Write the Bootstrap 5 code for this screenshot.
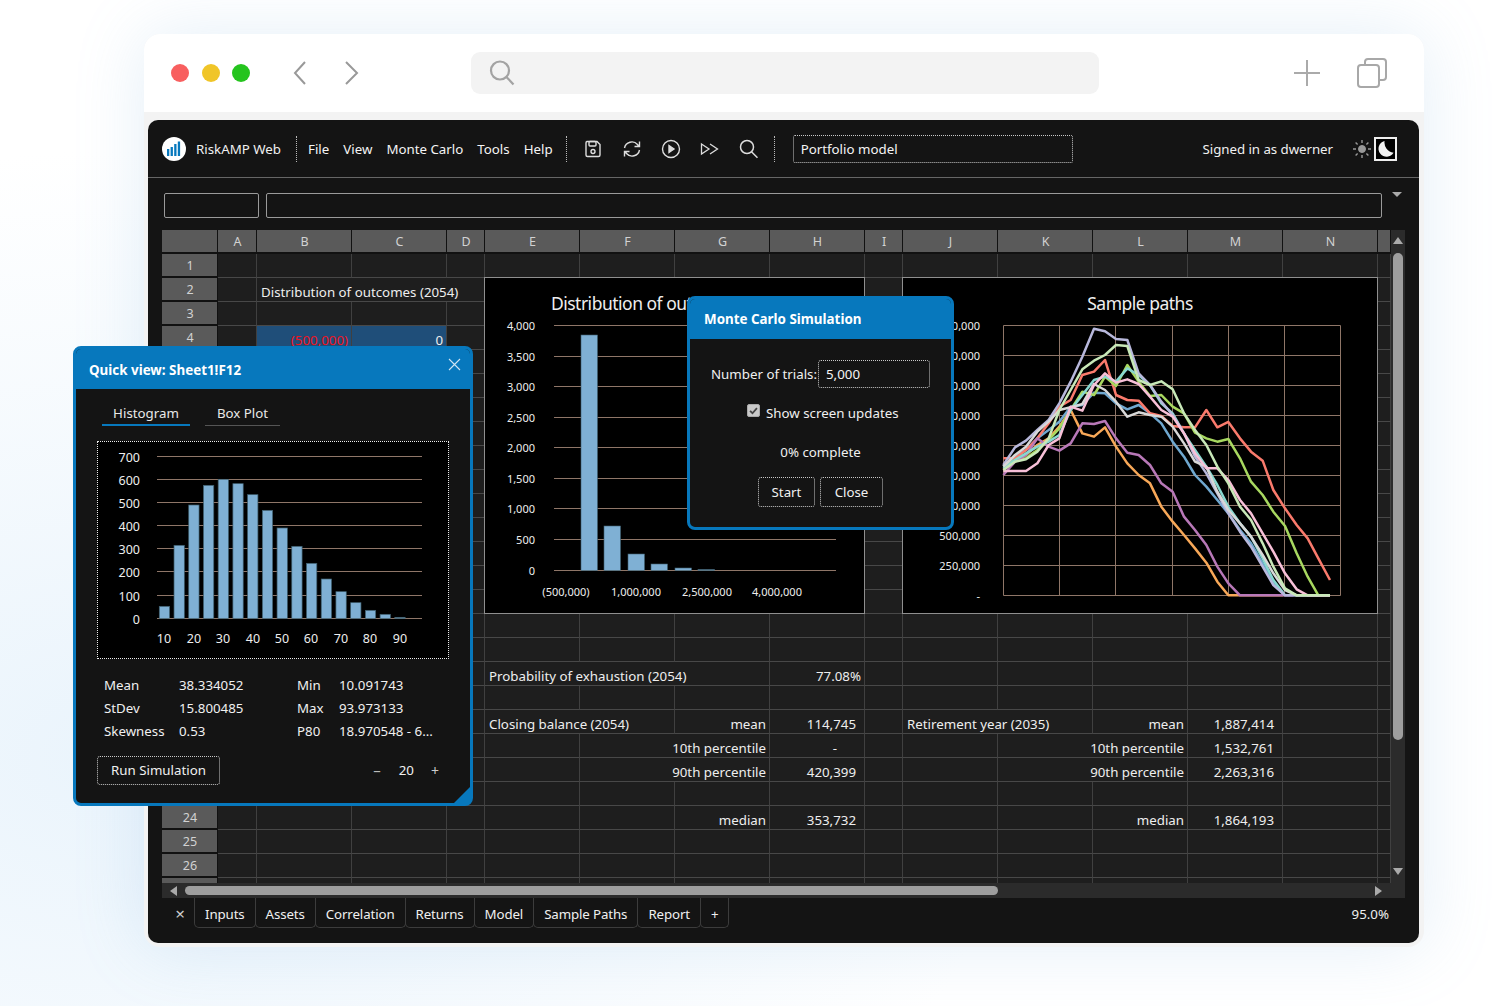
<!DOCTYPE html>
<html lang="en">
<head>
<meta charset="utf-8">
<title>RiskAMP Web</title>
<link href="https://cdn.jsdelivr.net/npm/bootstrap@5.3.0/dist/css/bootstrap.min.css" rel="stylesheet">
<style>
html,body{margin:0;background:#fff;overflow:hidden}
body{font-family:"Noto Sans","Liberation Sans",sans-serif;font-size:13.3px;color:#f0f0f0}
.stage{position:relative;width:1497px;height:1006px;padding:34px 73px 0 144px;overflow:hidden;
 background:radial-gradient(ellipse 60% 60% at 8% 75%,#eaf4fc 0,#fff 100%)}
.shell{width:1280px;height:913px;background:#f3f3f3;border-radius:16px;box-shadow:0 0 70px rgba(120,175,220,.2);overflow:hidden}
.topbar{height:78px;background:#fff;padding:0 37px 0 27px}
.dot{width:18px;height:18px;border-radius:50%;margin-right:12.5px}
.d-r{background:#f85f5f}.d-y{background:#f0c528}.d-g{background:#25c41e}
.navarrows{margin-left:29px}
.addr{width:628px;height:42px;background:#f3f3f3;border-radius:9px;margin:0 auto 0 103px;padding-left:17px}
.copyic{margin-left:36px}
.app{width:1271px;height:823px;margin:8px 0 0 4px;background:#141414;border-radius:10px;overflow:hidden}
.tbar{height:58px;padding:0 22px 0 14px;border-bottom:1px solid #666;flex-wrap:nowrap}
.logo{width:24px;height:24px;border-radius:50%;background:#fff;margin-right:10px}
.vsep{width:0;height:26px;border-left:1px dotted #bbb}
.lbl{position:relative;top:1px}
.brand{margin-right:15px}
.sep1{margin-right:11px}.sep2{margin-right:16px}
.mi{margin-right:14px;color:#f4f4f4}
.mi-last{margin-right:13px}
.tool{margin-right:19px;width:20px;height:20px;display:block}
.tool-last{margin-right:15px}
.dot-input{border:1px dotted #c8c8c8;border-radius:2px;background:transparent;color:#f4f4f4;font-size:13.3px}
.dot-input:focus{background:transparent;color:#f4f4f4}
.doc{width:280px;height:28px;padding:0 7px;margin-left:18px}
.signed{margin-right:20px;letter-spacing:-.05px}
.moon{width:23px;height:24px;border:2px solid #eee;background:#000;margin-left:3px}
.fbar{height:52px;padding:15px 0 0 16px}
.fbox{height:25px;border:1px solid #9a9a9a;border-radius:2px}
.fname{width:95px;margin-right:7px}.fmain{width:1116px}
.caret-d{width:0;height:0;border:5px solid transparent;border-top:5px solid #aaa;border-bottom:0;margin:-1px 0 0 10px}
.gridwrap{height:668px;margin-left:14px;width:1243px}
.sheet{display:grid;grid-template-columns:56px 39px 95px 95px 38px 95px 95px 95px 95px 38px 95px 95px 95px 95px 95px 13px;grid-auto-rows:24px;width:1229px;height:653px;overflow:hidden;background:#1e1e1e;align-content:start}
.hd{background:#5a5a5a;color:#d2d2d2;text-align:center;line-height:23px;border-right:1px solid #111;border-bottom:2px solid #111;font-size:12.5px;padding-left:1px}
.cl{border-right:1px solid #404040;border-bottom:1px solid #484848;padding:3px 4px 0;line-height:23px;white-space:nowrap;overflow:hidden;color:#eee}
.cl.rt{text-align:right;padding-right:3px}
.cl.ac{padding-right:8px}.cl.ac2{padding-right:27px}
.blu{background:#1f4e79}.red{color:#f01322}
.chartbox{margin:-1px 0 0 -1px;border:1px solid #8f8f8f;background:#000;z-index:1}
.chartbox svg{display:block}
.cx{font-family:"Noto Sans","Liberation Sans",sans-serif}
.ttl{letter-spacing:-.5px}
.vs{width:14px;height:653px;background:#2b2b2b}
.vthumb{width:10px;height:487px;margin:9px auto 0;border-radius:5px;background:#9e9e9e}
.arr-u{width:0;height:0;border:5px solid transparent;border-bottom:7px solid #aaa;border-top:0;margin:7px auto 0}
.arr-d{width:0;height:0;border:5px solid transparent;border-top:7px solid #aaa;border-bottom:0;margin:0 auto 8px}
.hs{height:15px;background:#2b2b2b;width:1243px;padding:0 23px 0 8px}
.arr-l{width:0;height:0;border:5px solid transparent;border-right:7px solid #aaa;border-left:0}
.arr-r{width:0;height:0;border:5px solid transparent;border-left:7px solid #aaa;border-right:0;margin-left:auto}
.hthumb{width:813px;height:9px;border-radius:5px;background:#9e9e9e;margin-left:8px}
.sheetbar{height:30px;margin-left:14px;width:1227px}
.sx{width:33px;padding-left:3px;text-align:center;color:#ccc;font-size:17px;line-height:31px}
.stab{border:1px solid #3c3c3c;border-top:0;border-radius:0 0 5px 5px;height:30px;line-height:33px;padding:0 10px;color:#f0f0f0;margin-left:-1px;letter-spacing:-.12px}
.zoomv{margin-left:auto;color:#eee;line-height:33px}
.win{position:absolute;z-index:5;border:3px solid #0778bd;border-radius:8px;background:#141414;--bs-card-bg:#141414;color:#f0f0f0}
.win .card-header{background:#0778bd;border:0;border-radius:5px 5px 0 0;color:#fff;font-weight:700;font-size:13.4px;padding:0 13px;height:40px;line-height:42px;position:relative}
.qv{left:73px;top:346px;width:400px;height:460px}
.qv .card-body{padding:0 21px}
.mc{left:687px;top:296px;width:267px;height:234px}
.win.mc .card-header{height:40px;padding-left:14px;line-height:40px}
.xbtn{position:absolute;right:9px;top:9px;width:13px;height:13px}
.qtabs{padding:13px 0 0 5px;height:52px;gap:15px}
.qt{height:24px;line-height:23px;text-align:center;border-bottom:1px solid #555;color:#e8e8e8}
.qt.on{border-bottom:2px solid #0778bd}
.qt-a{width:88px}.qt-b{width:75px}
.hbox{width:352px;height:218px;border:1px dotted #eee;background:#000}
.stat{display:grid;grid-template-columns:75px 118px 42px auto;grid-auto-rows:23px;line-height:23px;padding:15px 0 0 7px;height:97px}
.dbtn{border:1px dotted #c8c8c8;border-radius:3px;color:#f0f0f0;font-size:13.3px;padding:0;height:29px;line-height:27px;background:transparent;--bs-btn-hover-color:#fff}
.run{width:123px}
.stepper{margin-left:auto;gap:19px;padding-right:10px;align-items:center}
.minus{color:#bbb;font-size:15px;padding-right:1px;margin-right:-2px}.plus{color:#ccc;font-size:14px;margin-left:-2px}
.grip{position:absolute;right:0;bottom:0;width:16px;height:16px;background:#0778bd;clip-path:polygon(100% 0,100% 100%,0 100%)}
.mc .card-body{padding:21px 0 0}
.mrow{padding-left:21px;height:28px;gap:1px}
.tr{width:112px;height:28px;padding:0 7px;border-radius:3px}
.chk{margin-top:16px;height:20px;padding-left:57px;gap:6px}
.chk .form-check-input{width:13px;height:13px;margin:-7px 0 0;background-color:#c9c9c9;border:1px solid #aaa;border-radius:2px;
 background-image:url("data:image/svg+xml,%3csvg xmlns='http://www.w3.org/2000/svg' viewBox='0 0 16 16'%3e%3cpath fill='none' stroke='%23444' stroke-width='2.6' d='M3 8.5l3.5 3.5L13 4.5'/%3e%3c/svg%3e")}
.pct{margin-top:18px;text-align:center;line-height:20px}
.mbtns{margin-top:15px;gap:5px}
.b-start{width:57px;height:30px}.b-close{width:63px;height:30px}
</style>
</head>
<body>
<div class="stage">
 <div class="shell">
  <div class="topbar d-flex align-items-center">
   <span class="dot d-r"></span><span class="dot d-y"></span><span class="dot d-g"></span>
   <svg class="navarrows" width="76" height="26" viewBox="0 0 76 26" fill="none" stroke="#999" stroke-width="2"><path d="M13 2 3 13l10 11"/><path d="M54 2l11 11-11 11"/></svg>
   <div class="addr d-flex align-items-center">
    <svg width="28" height="28" viewBox="0 0 28 28" fill="none" stroke="#a3a3a3" stroke-width="2.2"><circle cx="12" cy="11.5" r="9"/><path d="M18.5 18l7 7.5"/></svg>
   </div>
   <svg width="28" height="28" viewBox="0 0 28 28" fill="none" stroke="#aaa" stroke-width="2"><path d="M14 1v26M1 14h26"/></svg>
   <svg class="copyic" width="30" height="30" viewBox="0 0 30 30" fill="none" stroke="#a8a8a8" stroke-width="2"><rect x="1" y="7" width="21" height="22" rx="3"/><path d="M8 7V4a3 3 0 0 1 3-3h15a3 3 0 0 1 3 3v15a3 3 0 0 1-3 3h-4"/></svg>
  </div>
  <div class="app">
   <nav class="navbar tbar d-flex align-items-center justify-content-start">
    <svg class="logo" viewBox="0 0 24 24"><g fill="#0778bd"><rect x="5" y="12" width="2.3" height="7"/><rect x="8.6" y="10" width="2.3" height="9"/><rect x="12.2" y="7" width="2.3" height="12"/><rect x="15.8" y="4.5" width="2.3" height="14.5"/></g></svg>
    <span class="brand lbl text-nowrap">RiskAMP Web</span>
    <span class="vsep sep1"></span>
    <span class="mi lbl">File</span><span class="mi lbl">View</span><span class="mi lbl text-nowrap">Monte Carlo</span><span class="mi lbl">Tools</span><span class="mi mi-last lbl">Help</span>
    <span class="vsep sep2"></span>
    <svg class="tool" viewBox="0 0 20 20" fill="none" stroke="#ddd" stroke-width="1.4"><path d="M4 2.5h10l3 3V16a1.500 1.500 0 0 1-1.500 1.500H4.500A1.500 1.500 0 0 1 3 16V4a1.500 1.500 0 0 1 1-1.500z"/><rect x="6" y="2.500" width="7" height="4.500" rx="1"/><circle cx="10" cy="12.500" r="2"/></svg>
    <svg class="tool" viewBox="0 0 20 20" fill="none" stroke="#ddd" stroke-width="1.4"><path d="M2.500 9a7.500 7.500 0 0 1 13-3.500L17 7.500M17.500 2.500v5h-5"/><path d="M17.500 11a7.500 7.500 0 0 1-13 3.500L3 12.500M2.500 17.500v-5h5"/></svg>
    <svg class="tool" viewBox="0 0 20 20" fill="none" stroke="#ddd" stroke-width="1.4"><circle cx="10" cy="10" r="8.500"/><path d="M8 6.500l5 3.500-5 3.500z" fill="#ddd"/></svg>
    <svg class="tool" viewBox="0 0 20 20" fill="none" stroke="#ddd" stroke-width="1.3"><path d="M1.500 5l7.500 5-7.500 5zM10 5l7.500 5-7.500 5"/></svg>
    <svg class="tool tool-last" viewBox="0 0 20 20" fill="none" stroke="#ddd" stroke-width="1.500"><circle cx="8" cy="8" r="6.500"/><path d="M12.500 12.800l6 6"/></svg>
    <span class="vsep"></span>
    <input class="form-control dot-input doc" value="Portfolio model" aria-label="Model name">
    <span class="signed lbl ms-auto text-nowrap">Signed in as dwerner</span>
    <svg width="18" height="18" viewBox="0 0 18 18" fill="#999" stroke="#999"><circle cx="9" cy="9" r="3.500"/><path d="M9 0v3M9 15v3M0 9h3M15 9h3M2.600 2.600l2 2M13.400 13.400l2 2M2.600 15.400l2-2M13.400 4.600l2-2" stroke-width="1.400"/></svg>
    <svg class="moon" viewBox="0 0 20 20"><path d="M9 1.500A8.500 8.500 0 1 0 18.500 14 A11 11 0 0 1 9 1.500z" fill="#f2f2f2"/></svg>
   </nav>
   <div class="fbar d-flex">
    <div class="fbox fname"></div>
    <div class="fbox fmain"></div>
    <span class="caret-d"></span>
   </div>
   <div class="gridwrap">
    <div class="d-flex">
     <div class="sheet" id="sheet"></div>
     <div class="vs d-flex flex-column"><span class="arr-u"></span><span class="vthumb"></span><span class="arr-d mt-auto"></span></div>
    </div>
    <div class="hs d-flex align-items-center"><span class="arr-l"></span><span class="hthumb"></span><span class="arr-r"></span></div>
   </div>
   <div class="sheetbar d-flex">
    <span class="sx">×</span>
    <span class="stab">Inputs</span><span class="stab">Assets</span><span class="stab">Correlation</span><span class="stab">Returns</span><span class="stab">Model</span><span class="stab">Sample Paths</span><span class="stab">Report</span><span class="stab">+</span>
    <span class="zoomv">95.0%</span>
   </div>
  </div>
 </div>

 <div class="card win qv">
  <div class="card-header">Quick view: Sheet1!F12
   <svg class="xbtn" viewBox="0 0 13 13" stroke="#cfe4f2" stroke-width="1.100"><path d="M1 1l11 11M12 1 1 12"/></svg>
  </div>
  <div class="card-body">
   <div class="d-flex qtabs">
    <div class="qt qt-a on">Histogram</div>
    <div class="qt qt-b">Box Plot</div>
   </div>
   <div class="hbox"><svg id="hist" width="350" height="216" viewBox="98 442 350 216"></svg></div>
   <div class="stat">
    <span>Mean</span><span>38.334052</span><span>Min</span><span>10.091743</span>
    <span>StDev</span><span>15.800485</span><span>Max</span><span>93.973133</span>
    <span>Skewness</span><span>0.53</span><span>P80</span><span>18.970548 - 6...</span>
   </div>
   <div class="d-flex align-items-center">
    <button class="btn dbtn run" type="button">Run Simulation</button>
    <div class="d-flex stepper"><span class="minus">–</span><span>20</span><span class="plus">+</span></div>
   </div>
  </div>
  <span class="grip"></span>
 </div>

 <div class="card win mc">
  <div class="card-header">Monte Carlo Simulation</div>
  <div class="card-body">
   <div class="d-flex align-items-center mrow"><span class="lbl text-nowrap">Number of trials:</span><input class="form-control dot-input tr" value="5,000" aria-label="Number of trials"></div>
   <div class="d-flex align-items-center chk"><input class="form-check-input" type="checkbox" checked aria-label="Show screen updates"><span>Show screen updates</span></div>
   <div class="pct">0% complete</div>
   <div class="d-flex justify-content-center mbtns">
    <button class="btn dbtn b-start" type="button">Start</button>
    <button class="btn dbtn b-close" type="button">Close</button>
   </div>
  </div>
 </div>
</div>
<script src="https://cdn.jsdelivr.net/npm/bootstrap@5.3.0/dist/js/bootstrap.bundle.min.js"></script>
<script>
const NS='http://www.w3.org/2000/svg';
const sheet=document.getElementById('sheet');
function div(cls,txt,col,span,row,rspan){const d=document.createElement('div');d.className=cls;if(txt)d.textContent=txt;
 if(col){d.style.gridColumn=col+' / span '+(span||1);d.style.gridRow=row+' / span '+(rspan||1);}sheet.appendChild(d);return d;}
const heads=['','A','B','C','D','E','F','G','H','I','J','K','L','M','N',''];
heads.forEach((h,i)=>div('hd',h,i+1,1,1));
const special={
 '2,3':[3,'Distribution of outcomes (2054)',''],
 '4,3':[1,'(500,000)','rt blu red'],'4,4':[1,'0','rt blu'],
 '18,6':[3,'Probability of exhaustion (2054)',''],'18,9':[1,'77.08%','rt'],
 '20,6':[2,'Closing balance (2054)',''],'20,8':[1,'mean','rt'],'20,9':[1,'114,745','rt ac'],
 '20,11':[2,'Retirement year (2035)',''],'20,13':[1,'mean','rt'],'20,14':[1,'1,887,414','rt ac'],
 '21,7':[2,'10th percentile','rt'],'21,9':[1,'-','rt ac2'],'21,12':[2,'10th percentile','rt'],'21,14':[1,'1,532,761','rt ac'],
 '22,7':[2,'90th percentile','rt'],'22,9':[1,'420,399','rt ac'],'22,12':[2,'90th percentile','rt'],'22,14':[1,'2,263,316','rt ac'],
 '24,8':[1,'median','rt'],'24,9':[1,'353,732','rt ac'],'24,13':[1,'median','rt'],'24,14':[1,'1,864,193','rt ac']
};
for(let r=1;r<=27;r++){
 // row numbers 5-23 lie wholly under the Quick view window and 27 is clipped by the scrollbar
 const shown=r<=4||(r>=24&&r<=26);
 div('hd',shown?String(r):'',1,1,r+1);
 for(let c=2;c<=16;){
  if(r>=2&&r<=15&&((c>=6&&c<=9)||(c>=11&&c<=15))){c++;continue;}
  const s=special[r+','+c];
  if(s){div('cl '+s[2],s[1],c,s[0],r+1);c+=s[0];}
  else{div('cl','',c,1,r+1);c++;}
 }
}
function el(parent,name,attrs,txt){const e=document.createElementNS(NS,name);for(const k in attrs)e.setAttribute(k,attrs[k]);if(txt!==undefined)e.textContent=txt;parent.appendChild(e);return e;}
function chart(col,span,w,vb){const b=document.createElement('div');b.className='chartbox';b.style.gridColumn=col+' / span '+span;b.style.gridRow='3 / span 14';sheet.appendChild(b);
 const s=document.createElementNS(NS,'svg');s.setAttribute('width',w);s.setAttribute('height',335);s.setAttribute('viewBox',vb+' '+w+' 335');b.appendChild(s);return s;}
const GRID='#8f7668';
// chart 1
const c1=chart(6,4,379,'485 278');
el(c1,'text',{x:673,y:309.5,'text-anchor':'middle','font-size':17.5,fill:'#eee',class:'cx ttl'},'Distribution of outcomes (2054)');
[['4,000',325],['3,500',356],['3,000',386],['2,500',417],['2,000',447],['1,500',478],['1,000',508],['500',539],['0',570]].forEach(a=>{
 el(c1,'line',{x1:554,x2:836,y1:a[1]+.5,y2:a[1]+.5,stroke:GRID});
 el(c1,'text',{x:535,y:a[1]+5,'text-anchor':'end','font-size':11,fill:'#eee',class:'cx'},a[0]);});
[[581,335],[604,526],[628,554],[651,564],[675,568],[698,569.5]].forEach(b=>el(c1,'rect',{x:b[0],y:b[1],width:16.5,height:570.5-b[1],fill:'#7fb0d4',stroke:'#3f6070','stroke-width':.6}));
[['(500,000)',566],['1,000,000',636],['2,500,000',707],['4,000,000',777]].forEach(a=>el(c1,'text',{x:a[1],y:596,'text-anchor':'middle','font-size':11,fill:'#eee',class:'cx'},a[0]));
// chart 2
const c2=chart(11,5,474,'903 278');
el(c2,'text',{x:1140,y:309.5,'text-anchor':'middle','font-size':17.5,fill:'#eee',class:'cx ttl'},'Sample paths');
['2,250,000','2,000,000','1,750,000','1,500,000','1,250,000','1,000,000','750,000','500,000','250,000','-'].forEach((t,i)=>{
 const y=325.5+i*30;el(c2,'line',{x1:1003.5,x2:1340.5,y1:Math.min(y,595.5),y2:Math.min(y,595.5),stroke:GRID});
 el(c2,'text',{x:980,y:y+4.500,'text-anchor':'end','font-size':11,fill:'#eee',class:'cx'},t);});
[1003.5,1059.5,1115.5,1172.5,1228.5,1284.5,1340.5].forEach(x=>el(c2,'line',{x1:x,x2:x,y1:325.5,y2:595.5,stroke:GRID}));
const paths=[
['#f8a858','160,480 195,450 228,435 262,405 296,385 328,350 362,300 397,370 432,380 465,352 498,410 532,460 566,495 600,520 634,590 668,635 702,675 735,715 769,758 802,815 835,856 1000,856'],
['#70a8d0','160,470 195,440 228,420 262,385 296,360 328,335 362,290 397,285 432,248 465,250 498,280 532,298 566,285 600,310 634,340 668,395 702,440 735,495 769,530 802,570 835,610 870,660 903,700 938,760 970,820 1005,856 1140,856'],
['#fa7a6c','160,445 195,445 228,420 262,385 296,340 328,290 362,270 397,195 432,185 465,150 498,255 532,270 566,272 600,310 634,318 668,348 702,352 735,352 769,300 802,352 835,336 870,385 903,425 938,452 970,540 1005,595 1040,645 1073,685 1105,745 1140,810'],
['#a8d860','160,470 195,450 228,445 262,420 296,390 328,355 362,300 397,245 432,255 465,200 498,228 532,165 566,215 600,258 634,255 668,290 702,310 735,368 769,385 802,395 835,387 870,445 903,515 938,555 970,605 1005,648 1040,730 1073,800 1105,856 1140,856'],
['#b878b8','160,495 195,455 228,435 262,385 296,410 328,422 362,400 397,340 432,342 465,333 498,385 532,428 566,435 600,465 634,520 668,545 702,620 735,660 769,705 802,770 835,820 870,856 1030,856'],
['#88d8d0','160,475 195,450 228,430 262,410 296,395 328,375 362,300 397,255 432,210 465,200 498,215 532,175 566,195 600,225 634,280 668,310 702,370 735,420 769,470 802,525 835,590 870,640 903,680 938,745 970,810 1005,856'],
['#b8b8dc','160,465 195,412 228,392 262,360 296,330 328,280 362,215 397,140 432,56 465,64 498,87 532,90 566,190 600,225 634,275 668,315 702,370 735,440 769,490 802,550 835,610 870,665 903,710 938,770 970,825 1005,856 1140,856'],
['#d8d8d8','160,470 195,435 228,410 262,365 296,335 328,300 362,292 397,282 432,222 465,240 498,275 532,320 566,307 600,315 634,320 668,350 702,400 735,455 769,470 802,545 835,600 870,640 903,680 938,735 970,790 1005,840 1040,856 1140,856'],
['#f8c0d8','160,483 195,483 228,483 262,460 296,405 328,385 362,290 397,302 432,225 465,190 498,218 532,208 566,222 600,260 634,300 668,320 702,370 735,430 769,475 802,475 835,510 870,570 903,610 938,670 970,725 1005,790 1040,838 1073,856 1140,856'],
['#c8e8b8','160,480 195,455 228,448 262,425 296,385 328,300 362,240 397,178 432,152 465,135 498,105 532,108 566,210 600,225 634,214 668,238 702,310 735,360 769,405 802,470 835,520 870,590 903,630 938,700 970,770 1005,835 1040,856 1140,856']
];
const gp=el(c2,'g',{transform:'translate(950 310) scale(.33333)',fill:'none','stroke-width':7.5,'stroke-linejoin':'round'});
paths.forEach(p=>el(gp,'polyline',{points:p[1],stroke:p[0]}));
// histogram
const h=document.getElementById('hist');
[['700',456],['600',479],['500',502],['400',525],['300',548],['200',571],['100',595],['0',618]].forEach(a=>{
 el(h,'line',{x1:157,x2:422,y1:a[1]+.5,y2:a[1]+.5,stroke:GRID});
 el(h,'text',{x:140,y:a[1]+5.5,'text-anchor':'end','font-size':12.500,fill:'#eee',class:'cx'},a[0]);});
[799,616,495,436,418,431,464,511,564,619,670,717,755,788,811,823,832].forEach((t,i)=>{
 const top=340+t/3;el(h,'rect',{x:159.300+i*14.72,y:top,width:10.300,height:618.500-top,fill:'#7fb0d4',stroke:'#3f6070','stroke-width':.7});});
[[10,164],[20,194],[30,223],[40,253],[50,282],[60,311],[70,341],[80,370],[90,400]].forEach(a=>el(h,'text',{x:a[1],y:643,'text-anchor':'middle','font-size':12.500,fill:'#eee',class:'cx'},a[0]));
</script>
</body>
</html>
